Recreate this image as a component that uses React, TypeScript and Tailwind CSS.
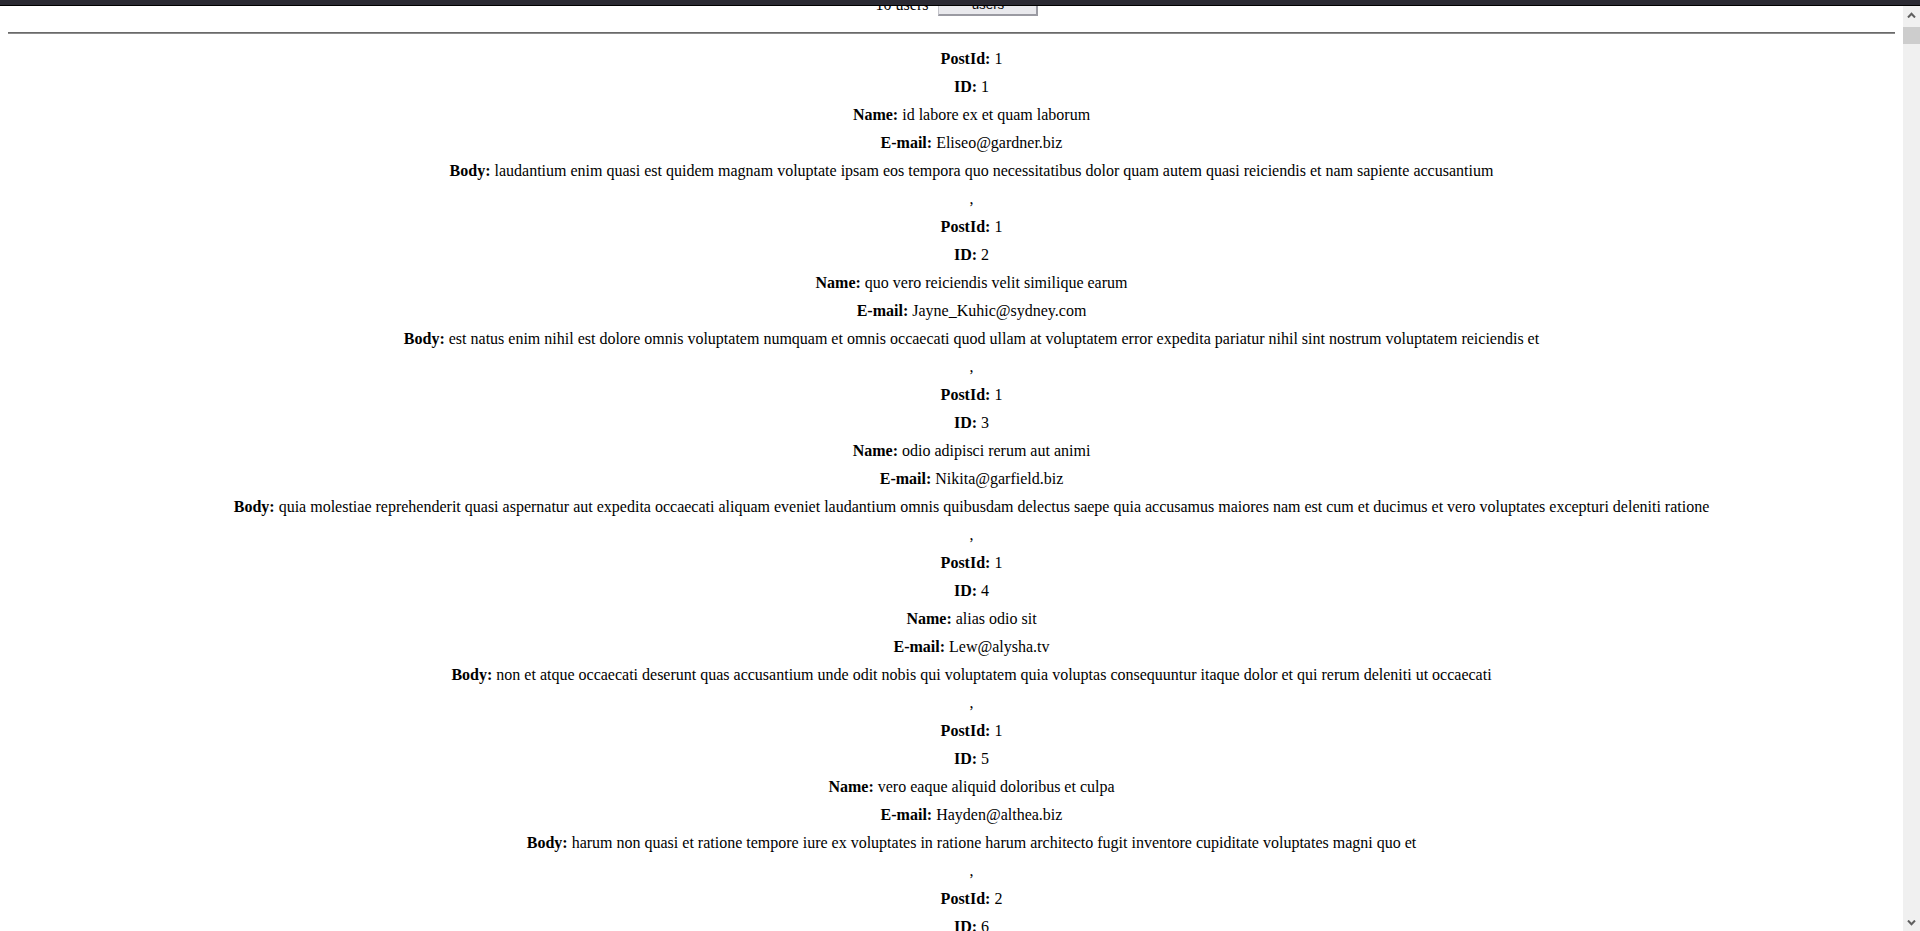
import React, { useLayoutEffect, useRef } from 'react';

interface Comment {
  postId: number;
  id: number;
  name: string;
  email: string;
  body: string;
}

const comments: Comment[] = [
  {
    postId: 1,
    id: 1,
    name: 'id labore ex et quam laborum',
    email: 'Eliseo@gardner.biz',
    body: 'laudantium enim quasi est quidem magnam voluptate ipsam eos tempora quo necessitatibus dolor quam autem quasi reiciendis et nam sapiente accusantium',
  },
  {
    postId: 1,
    id: 2,
    name: 'quo vero reiciendis velit similique earum',
    email: 'Jayne_Kuhic@sydney.com',
    body: 'est natus enim nihil est dolore omnis voluptatem numquam et omnis occaecati quod ullam at voluptatem error expedita pariatur nihil sint nostrum voluptatem reiciendis et',
  },
  {
    postId: 1,
    id: 3,
    name: 'odio adipisci rerum aut animi',
    email: 'Nikita@garfield.biz',
    body: 'quia molestiae reprehenderit quasi aspernatur aut expedita occaecati aliquam eveniet laudantium omnis quibusdam delectus saepe quia accusamus maiores nam est cum et ducimus et vero voluptates excepturi deleniti ratione',
  },
  {
    postId: 1,
    id: 4,
    name: 'alias odio sit',
    email: 'Lew@alysha.tv',
    body: 'non et atque occaecati deserunt quas accusantium unde odit nobis qui voluptatem quia voluptas consequuntur itaque dolor et qui rerum deleniti ut occaecati',
  },
  {
    postId: 1,
    id: 5,
    name: 'vero eaque aliquid doloribus et culpa',
    email: 'Hayden@althea.biz',
    body: 'harum non quasi et ratione tempore iure ex voluptates in ratione harum architecto fugit inventore cupiditate voluptates magni quo et',
  },
  {
    postId: 2,
    id: 6,
    name: 'et fugit eligendi deleniti quidem qui sint nihil autem',
    email: 'Presley.Mueller@myrl.com',
    body: 'doloribus at sed quis culpa deserunt consectetur qui praesentium accusamus fugiat dicta voluptatem rerum ut voluptate autem voluptatem repellendus aspernatur dolorem in',
  },
  {
    postId: 2,
    id: 7,
    name: 'repellat consequatur praesentium vel minus molestias voluptatum',
    email: 'Dallas@ole.me',
    body: 'maiores sed dolores similique labore et inventore et quasi temporibus esse sunt id et eos voluptatem aliquam aliquid ratione corporis molestiae mollitia quia et magnam dolor',
  },
];

const Field: React.FC<{ label: string; value: React.ReactNode }> = ({ label, value }) => (
  <p className="leading-[28px]">
    <b>{label}:</b> {value}
  </p>
);

const Chevron: React.FC<{ up?: boolean }> = ({ up }) => (
  <svg width="9" height="6" viewBox="0 0 9 6" className={up ? '' : 'rotate-180'}>
    <polyline points="1,5.5 4.5,1.8 8,5.5" fill="none" stroke="#606060" strokeWidth="2" />
  </svg>
);

// fake firefox-ish scrollbar, the page is shown scrolled a little
const Scrollbar = () => (
  <div className="flex w-[17px] shrink-0 flex-col bg-[#f0f0f0]">
    <div className="flex h-[17px] items-center justify-center">
      <Chevron up />
    </div>
    <div className="mt-[4px] h-[17px] bg-[#cdcdcd]" />
    <div className="flex-1" />
    <div className="flex h-[17px] items-center justify-center">
      <Chevron />
    </div>
  </div>
);

export default function App() {
  const scrollRef = useRef<HTMLDivElement>(null);

  useLayoutEffect(() => {
    if (scrollRef.current) scrollRef.current.scrollTop = 23;
  }, []);

  return (
    <div className="flex h-screen flex-col overflow-hidden bg-white text-black font-['Liberation_Serif',serif] text-[16px]">
      <div className="box-content h-[5px] shrink-0 border-b border-black bg-[#2b2a33]" />
      <div className="flex min-h-0 flex-1">
        <div ref={scrollRef} className="min-w-0 flex-1 overflow-hidden px-[8px] pt-[8px]">
          <div className="flex h-[28px] items-center justify-center pl-[11px]">
            <span>10 users</span>
            <button className="ml-[10px] h-[22px] w-[100px] border-l border-t border-r-2 border-b-2 border-l-[#c4c4ca] border-t-[#c4c4ca] border-r-[#9a9aa2] border-b-[#9a9aa2] bg-[#e9e9ed] font-['Liberation_Sans',sans-serif] text-[13.33px] text-black">
              users
            </button>
          </div>
          <hr className="mt-[13px] border-t border-b border-t-[#6a6a6a] border-b-[#8c8c8c]" />
          <ul className="mt-[11px] pl-[40px] text-center">
            {comments.map((c, i) => (
              <React.Fragment key={c.id}>
                {i > 0 && <div className="leading-[28px]">,</div>}
                <li>
                  <Field label="PostId" value={c.postId} />
                  <Field label="ID" value={c.id} />
                  <Field label="Name" value={c.name} />
                  <Field label="E-mail" value={c.email} />
                  <Field label="Body" value={c.body} />
                </li>
              </React.Fragment>
            ))}
          </ul>
        </div>
        <Scrollbar />
      </div>
    </div>
  );
}
